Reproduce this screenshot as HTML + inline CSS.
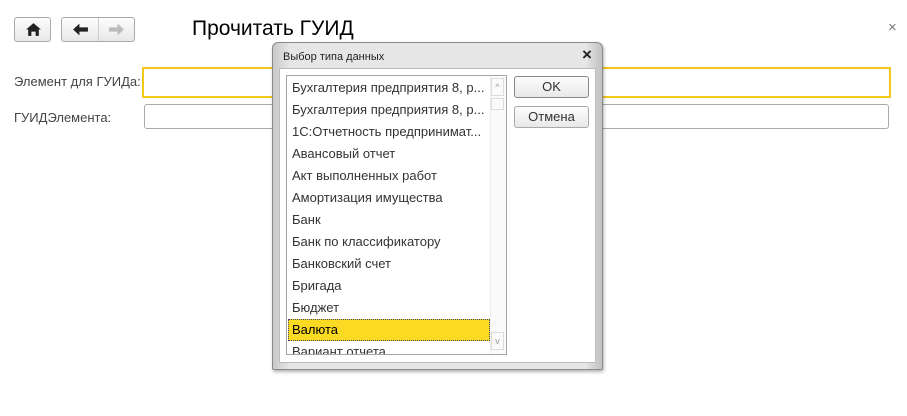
<!DOCTYPE html>
<html><head><meta charset="utf-8"><style>
*{box-sizing:border-box;margin:0;padding:0}
body{width:907px;height:416px;background:#fff;position:relative;overflow:hidden;font-family:"Liberation Sans",Arial,sans-serif;font-size:13px;color:#333}
.abs{position:absolute}
.btn{position:absolute;border:1px solid #a9a9a9;border-radius:3px;background:linear-gradient(#fdfdfd,#e8e8e8)}
.lbl{position:absolute;font-size:13px;color:#444}
.item{position:absolute;left:1px;width:202px;height:22px;line-height:22px;padding-left:4px;font-size:13px;color:#333;white-space:nowrap;overflow:hidden}
</style></head><body>
<div class="btn" style="left:14px;top:17px;width:37px;height:25px">
<svg class="abs" style="left:10px;top:4px" width="17" height="15" viewBox="0 0 16 14"><path d="M8 1 L15 7 L13 7 L13 13 L10 13 L10 9 L6 9 L6 13 L3 13 L3 7 L1 7 Z" fill="#222"/></svg></div>
<div class="btn" style="left:61px;top:17px;width:74px;height:25px">
<div class="abs" style="left:36px;top:0;width:1px;height:23px;background:#ccc"></div>
<svg class="abs" style="left:10px;top:4px" width="17" height="15" viewBox="0 0 16 14"><path d="M1 7 L7 1.5 L7 5 L15 5 L15 9 L7 9 L7 12.5 Z" fill="#222"/></svg>
<svg class="abs" style="left:46px;top:4px" width="17" height="15" viewBox="0 0 16 14"><path d="M15 7 L9 1.5 L9 5 L1 5 L1 9 L9 9 L9 12.5 Z" fill="#bbb"/></svg></div>
<div class="abs" style="left:192px;top:17px;font-size:21px;color:#000">Прочитать ГУИД</div>
<div class="abs" style="left:888px;top:19px;font-size:15px;color:#777">×</div>
<div class="lbl" style="left:14px;top:74px">Элемент для ГУИДа:</div>
<div class="lbl" style="left:14px;top:110px">ГУИДЭлемента:</div>
<div class="abs" style="left:142px;top:67px;width:749px;height:31px;border:2px solid #f5c718"></div>
<div class="abs" style="left:144px;top:104px;width:745px;height:25px;border:1px solid #aaa;border-radius:3px"></div>

<div class="abs" style="left:272px;top:42px;width:331px;height:328px;border:1px solid #8a8a8a;border-radius:6px 6px 2px 2px;background:linear-gradient(90deg,#c8c8c8,#e6e6e6 5%,#e6e6e6 95%,#c0c0c0);box-shadow:1px 2px 3px rgba(0,0,0,.3)">
<div class="abs" style="left:10px;top:8px;font-size:11px;color:#222">Выбор типа данных</div>
<div class="abs" style="left:309px;top:2px;font-size:17px;font-weight:bold;color:#222">×</div>
<div class="abs" style="left:6px;top:25px;width:317px;height:295px;background:#fff;border:1px solid #bbb"></div>
<div class="abs" style="left:13px;top:32px;width:221px;height:280px;border:1px solid #a5a5a5;background:#fff;overflow:hidden">
<div class="item" style="top:1px">Бухгалтерия предприятия 8, р...</div>
<div class="item" style="top:23px">Бухгалтерия предприятия 8, р...</div>
<div class="item" style="top:45px">1С:Отчетность предпринимат...</div>
<div class="item" style="top:67px">Авансовый отчет</div>
<div class="item" style="top:89px">Акт выполненных работ</div>
<div class="item" style="top:111px">Амортизация имущества</div>
<div class="item" style="top:133px">Банк</div>
<div class="item" style="top:155px">Банк по классификатору</div>
<div class="item" style="top:177px">Банковский счет</div>
<div class="item" style="top:199px">Бригада</div>
<div class="item" style="top:221px">Бюджет</div>
<div class="item" style="top:243px;background:#fada22;outline:1px dotted #446;outline-offset:-1px;color:#000">Валюта</div>
<div class="item" style="top:265px">Вариант отчета</div>
<div class="abs" style="left:203px;top:0;width:17px;height:278px;background:#fafafa;border-left:1px solid #eee"></div>
<div class="abs" style="left:204px;top:2px;width:13px;height:18px;border:1px solid #ddd;font-size:9px;color:#999;text-align:center;line-height:16px">^</div>
<div class="abs" style="left:204px;top:22px;width:13px;height:12px;border:1px solid #ddd"></div>
<div class="abs" style="left:204px;top:256px;width:13px;height:18px;border:1px solid #ddd;font-size:9px;color:#999;text-align:center;line-height:16px">v</div>
</div>
<div class="btn" style="left:241px;top:33px;width:75px;height:22px;border-color:#888;text-align:center;line-height:20px;color:#333">OK</div>
<div class="btn" style="left:241px;top:63px;width:75px;height:22px;text-align:center;line-height:20px;color:#333">Отмена</div>
</div>
</body></html>
